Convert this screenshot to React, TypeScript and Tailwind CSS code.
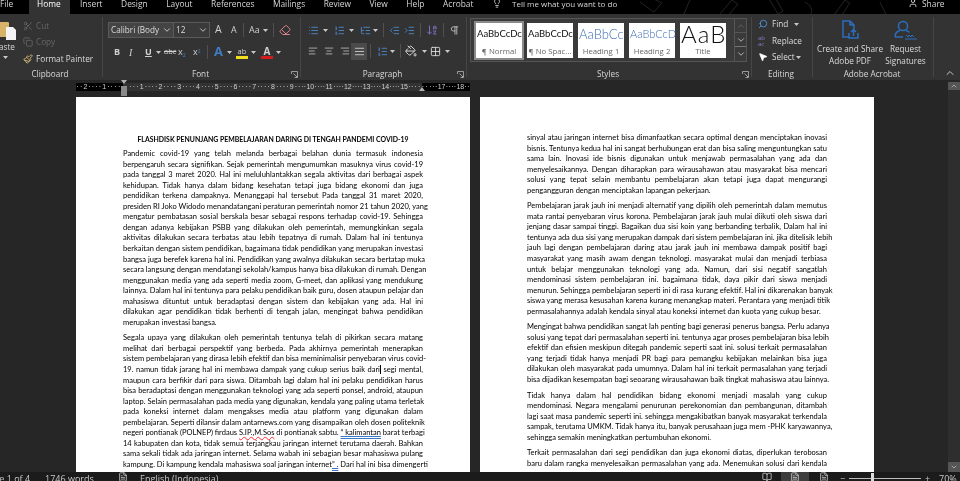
import type { ReactNode } from "react"
import {
  AlignCenter,
  AlignJustify,
  AlignLeft,
  AlignRight,
  ArrowDownAZ,
  BookOpen,
  ChevronDown,
  ChevronUp,
  Copy,
  Eraser,
  FileText,
  Grid2x2,
  IndentDecrease,
  IndentIncrease,
  Lightbulb,
  List,
  ListOrdered,
  ListTree,
  MousePointer2,
  Paintbrush,
  PaintBucket,
  Pilcrow,
  Scissors,
  Search,
  User,
} from "lucide-react"

const tabs = ["Insert", "Design", "Layout", "References", "Mailings", "Review", "View", "Help", "Acrobat"]

const rulerLabels = ["2", "1", "", "1", "2", "3", "4", "5", "6", "7", "8", "9", "10", "11", "12", "13", "14", "15", "", "17", "18"]

const styleItems = [
  { sample: "AaBbCcDc", label: "¶ Normal", cls: "text-[9.5px] text-[#111]", selected: true },
  { sample: "AaBbCcDc", label: "¶ No Spac...", cls: "text-[9.5px] text-[#111]", selected: false },
  { sample: "AaBbCc", label: "Heading 1", cls: "text-[13px] font-light text-[#3d6db5]", selected: false },
  { sample: "AaBbCcD", label: "Heading 2", cls: "text-[11px] font-light text-[#3d6db5]", selected: false },
  { sample: "AaB", label: "Title", cls: "text-[24px] font-light leading-[20px] tracking-[1px] text-[#111]", selected: false },
]

// left page, line by line so the breaks stay the same as the document
const pageOne: string[][] = [
  [
    "Pandemic covid-19 yang telah melanda berbagai belahan dunia termasuk indonesia",
    "berpengaruh secara signifikan. Sejak pemerintah mengumumkan masuknya virus covid-19",
    "pada tanggal 3 maret 2020. Hal ini meluluhlantakkan segala aktivitas dari berbagai aspek",
    "kehidupan. Tidak hanya dalam bidang kesehatan tetapi juga bidang ekonomi dan juga",
    "pendidikan terkena dampaknya. Menanggapi hal tersebut Pada tanggal 31 maret 2020,",
    "presiden RI Joko Widodo menandatangani peraturan pemerintah nomor 21 tahun 2020, yang",
    "mengatur pembatasan sosial berskala besar sebagai respons terhadap covid-19. Sehingga",
    "dengan adanya kebijakan PSBB yang dilakukan oleh pemerintah, memungkinkan segala",
    "aktivitas dilakukan secara terbatas atau lebih tepatnya di rumah. Dalam hal ini tentunya",
    "berkaitan dengan sistem pendidikan, bagaimana tidak pendidikan yang merupakan investasi",
    "bangsa juga berefek karena hal ini. Pendidikan yang awalnya dilakukan secara bertatap muka",
    "secara langsung dengan mendatangi sekolah/kampus hanya bisa dilakukan di rumah. Dengan",
    "menggunakan media yang ada seperti media zoom, G-meet, dan aplikasi yang mendukung",
    "lainnya. Dalam hal ini tentunya para pelaku pendidikan baik guru, dosen ataupun pelajar dan",
    "mahasiswa dituntut untuk beradaptasi dengan sistem dan kebijakan yang ada. Hal ini",
    "dilakukan agar pendidikan tidak berhenti di tengah jalan, mengingat bahwa pendidikan",
    "merupakan investasi bangsa.",
  ],
]

const pageTwo: string[][] = [
  [
    "sinyal atau jaringan internet bisa dimanfaatkan secara optimal dengan menciptakan inovasi",
    "bisnis. Tentunya kedua hal ini sangat berhubungan erat dan bisa saling menguntungkan satu",
    "sama lain. Inovasi ide bisnis digunakan untuk menjawab permasalahan yang ada dan",
    "menyelesaikannya. Dengan diharapkan para wirausahawan atau masyarakat bisa mencari",
    "solusi yang tepat selain membantu pembelajaran akan tetapi juga dapat mengurangi",
    "pengangguran dengan menciptakan lapangan pekerjaan.",
  ],
  [
    "Pembelajaran jarak jauh ini menjadi alternatif yang dipilih oleh pemerintah dalam memutus",
    "mata rantai penyebaran virus korona. Pembelajaran jarak jauh mulai diikuti oleh siswa dari",
    "jenjang dasar sampai tinggi.  Bagaikan dua sisi koin yang berbanding terbalik, Dalam hal ini",
    "tentunya ada dua sisi yang merupakan dampak dari sistem pembelajaran ini. jika ditelisik lebih",
    "jauh lagi dengan pembelajaran daring atau jarak jauh ini membawa dampak positif bagi",
    "masyarakat yang masih awam dengan teknologi. masyarakat mulai dan menjadi terbiasa",
    "untuk belajar menggunakan teknologi yang ada. Namun, dari sisi negatif sangatlah",
    "mendominasi sistem pembelajaran ini. bagaimana tidak, daya pikir dari siswa menjadi",
    "menurun. Sehingga pembelajaran seperti ini di rasa kurang efektif. Hal ini dikarenakan banyak",
    "siswa yang merasa kesusahan karena kurang menangkap materi. Perantara yang menjadi titik",
    "permasalahannya adalah kendala sinyal atau koneksi internet dan kuota yang cukup besar.",
  ],
  [
    "Mengingat bahwa pendidikan sangat lah penting bagi generasi penerus bangsa. Perlu adanya",
    "solusi yang tepat dari permasalahan seperti ini. tentunya agar proses pembelajaran bisa lebih",
    "efektif dan efisien meskipun ditegah pandemic seperti saat ini. solusi terkait permasalahan",
    "yang terjadi tidak hanya menjadi PR bagi para pemangku kebijakan melainkan bisa juga",
    "dilakukan oleh masyarakat pada umumnya. Dalam hal ini terkait permasalahan yang terjadi",
    "bisa dijadikan kesempatan bagi seoarang wirausahawan baik tingkat mahasiswa atau lainnya.",
  ],
  [
    "Tidak hanya dalam hal pendidikan bidang ekonomi menjadi masalah yang cukup",
    "mendominasi. Negara mengalami penurunan perekonomian dan pembangunan, ditambah",
    "lagi saat masa pandemic seperti ini. sehingga mengakibatkan banyak masyarakat terkendala",
    "sampak, terutama UMKM. Tidak hanya itu, banyak perusahaan juga mem -PHK karyawannya,",
    "sehingga semakin meningkatkan pertumbuhan ekonomi.",
  ],
]

function Line({ children, last }: { children: ReactNode; last?: boolean }) {
  return (
    <div className={last ? "h-[10.55px] whitespace-pre" : "h-[10.55px] whitespace-nowrap text-justify [text-align-last:justify]"}>
      {children}
    </div>
  )
}

function Para({ lines }: { lines: string[] }) {
  return (
    <div className="mb-[5px]">
      {lines.map((l, i) => (
        <Line key={i} last={i === lines.length - 1}>
          {l}
        </Line>
      ))}
    </div>
  )
}

function Caret({ className = "" }: { className?: string }) {
  return (
    <svg width="5" height="3" viewBox="0 0 5 3" className={`shrink-0 ${className}`}>
      <path d="M0 0h5L2.5 3z" fill="#c8c8c8" />
    </svg>
  )
}

function VSep({ className = "" }: { className?: string }) {
  return <div className={`h-[14px] w-px shrink-0 bg-[#505050] ${className}`} />
}

function Launcher() {
  return (
    <svg width="7" height="7" viewBox="0 0 7 7" className="shrink-0">
      <path d="M.5 3V.5h6v6H3.5M6 6 2.5 2.5M5 6h1V5" fill="none" stroke="#b5b5b5" strokeWidth="0.8" />
    </svg>
  )
}

function Group({ label, width, launcher, children }: { label: string; width: string; launcher?: boolean; children: ReactNode }) {
  return (
    <div className={`flex h-full shrink-0 flex-col ${width}`}>
      <div className="h-[54px] overflow-hidden">{children}</div>
      <div className="grid h-[12px] grid-cols-[1fr_auto_1fr] items-center pr-[2px] text-[8.2px] leading-[12px] text-[#d8d8d8]">
        <span />
        <span>{label}</span>
        <span className="flex justify-end">{launcher && <Launcher />}</span>
      </div>
    </div>
  )
}

function GroupSep() {
  return <div className="mt-[3px] h-[60px] w-px shrink-0 bg-[#464646]" />
}

const para = "h-[10px] w-[10px] shrink-0 text-[#bdbdbd]"
const paraBlue = "h-[11px] w-[11px] shrink-0 text-[#4b86c6]"

function RibbonFont() {
  return (
    <div className="pl-[5px] pt-[8px]">
      <div className="flex h-[16px] items-center">
        <div className="flex h-[16px] w-[66px] items-center justify-between border border-[#5a5a5a] bg-[#444] pl-[2px] pr-[1px] text-[8.2px] text-[#dcdcdc]">
          <span className="whitespace-nowrap">Calibri (Body</span>
          <ChevronDown className="h-[10px] w-[10px] shrink-0" />
        </div>
        <div className="flex h-[16px] w-[36px] items-center justify-between border border-l-0 border-[#5a5a5a] bg-[#3a3a3a] pl-[2px] pr-[1px] text-[8.2px] text-[#dcdcdc]">
          <span>12</span>
          <ChevronDown className="h-[10px] w-[10px]" />
        </div>
        <span className="ml-[5px] w-[16px] text-[10.5px] text-[#d0d0d0]">A</span>
        <span className="w-[12px] text-[9px] text-[#d0d0d0]">A</span>
        <VSep className="mr-[5px]" />
        <span className="w-[13px] text-[9px] text-[#cfcfcf]">Aa</span>
        <Caret className="ml-[1px]" />
        <VSep className="mx-[5px]" />
        <Eraser className="h-[12px] w-[12px] text-[#d8828c]" />
      </div>
      <div className="mt-[6px] flex h-[16px] items-center text-[#d0d0d0]">
        <span className="ml-[6px] w-[15px] text-[9px] font-bold">B</span>
        <span className="w-[16px] font-['Liberation_Serif',serif] text-[10px] italic">I</span>
        <span className="w-[10px] text-[9px] font-bold underline">U</span>
        <Caret className="ml-[1px]" />
        <span className="ml-[3px] w-[14px] text-[7.5px] line-through">abc</span>
        <span className="w-[15px] text-[9px]">
          x<sub className="text-[5px] text-[#4b86c6]">2</sub>
        </span>
        <span className="w-[14px] text-[9px]">
          x<sup className="text-[5px] text-[#4b86c6]">2</sup>
        </span>
        <VSep className="mr-[6px]" />
        <span className="w-[11px] text-[13px] font-bold text-[#3f7cc0]">A</span>
        <Caret className="ml-[2px]" />
        <div className="ml-[4px] flex w-[12px] flex-col items-center">
          <span className="h-[10px] text-[7.5px] leading-[10px]">ab</span>
          <span className="h-[3px] w-[12px] bg-[#f0e020]" />
        </div>
        <Caret className="ml-[3px]" />
        <div className="ml-[5px] flex w-[12px] flex-col items-center">
          <span className="h-[10px] text-[10px] font-bold leading-[10px]">A</span>
          <span className="h-[3px] w-[12px] bg-[#d01c1c]" />
        </div>
        <Caret className="ml-[3px]" />
      </div>
    </div>
  )
}

function RibbonParagraph() {
  return (
    <div className="pl-[7px] pt-[8px]">
      <div className="flex h-[16px] items-center">
        <List className={paraBlue} />
        <Caret className="ml-[4px]" />
        <ListOrdered className={`${paraBlue} ml-[6px]`} />
        <Caret className="ml-[4px]" />
        <ListTree className={`${paraBlue} ml-[6px]`} />
        <Caret className="ml-[2px]" />
        <VSep className="mx-[5px]" />
        <IndentDecrease className={paraBlue} />
        <IndentIncrease className={`${paraBlue} ml-[4px]`} />
        <VSep className="mx-[5px]" />
        <ArrowDownAZ className="h-[12px] w-[12px] text-[#7d6fc4]" />
        <VSep className="mx-[5px]" />
        <Pilcrow className="h-[11px] w-[11px] text-[#bdbdbd]" />
      </div>
      <div className="mt-[4px] flex h-[18px] items-center">
        <AlignLeft className={para} />
        <AlignCenter className={`${para} ml-[6px]`} />
        <AlignRight className={`${para} ml-[6px]`} />
        <div className="ml-[1px] flex h-[17px] w-[16px] items-center justify-center bg-[#4a4a4a]">
          <AlignJustify className="h-[11px] w-[11px] text-[#c8c8c8]" />
        </div>
        <VSep className="mx-[3px]" />
        <ListOrdered className={`${paraBlue} ml-[3px]`} />
        <Caret className="ml-[2px]" />
        <VSep className="ml-[5px] mr-[4px]" />
        <PaintBucket className="h-[12px] w-[12px] text-[#d8d8d8]" />
        <Caret className="ml-[5px]" />
        <Grid2x2 className="ml-[3px] h-[11px] w-[11px] text-[#d8d8d8]" />
        <Caret className="ml-[4px]" />
      </div>
    </div>
  )
}

function RibbonStyles() {
  return (
    <div className="ml-[3px] mt-[4px] flex h-[44px] w-[277px] border border-[#555] bg-[#3a3a3a]">
      <div className="flex items-center gap-[5px] pl-[5px]">
        {styleItems.map((s) => (
          <div
            key={s.label}
            className={`flex h-[35px] w-[46px] flex-col overflow-hidden bg-white ${s.selected ? "outline outline-2 outline-[#8a8a8a]" : ""}`}
          >
            <div className={`h-[22px] overflow-hidden whitespace-nowrap pl-[1px] font-['Lato',sans-serif] leading-[22px] ${s.cls}`}>{s.sample}</div>
            <div className="whitespace-nowrap text-center text-[7.8px] leading-[12px] text-[#666]">{s.label}</div>
          </div>
        ))}
      </div>
      <div className="ml-auto flex w-[12px] flex-col border-l border-[#555]">
        <div className="flex h-[14px] items-center justify-center border-b border-[#555]">
          <ChevronUp className="h-[10px] w-[10px] text-[#666]" />
        </div>
        <div className="flex h-[14px] items-center justify-center border-b border-[#777]">
          <ChevronDown className="h-[10px] w-[10px] text-[#ccc]" />
        </div>
        <div className="flex flex-1 items-center justify-center">
          <ChevronDown className="h-[10px] w-[10px] text-[#ccc]" />
        </div>
      </div>
    </div>
  )
}

function AcrobatPdf() {
  return (
    <svg width="19" height="20" viewBox="0 0 19 20" fill="none" stroke="#2a6fc0" strokeWidth="1.5">
      <path d="M8 17H2V1h7l4 4v4M9 1v4h4" />
      <path d="M8 13v5h9v-5M12.5 16V10M10 12l2.5-2.5L15 12" />
    </svg>
  )
}

function AcrobatSign() {
  return (
    <svg width="24" height="20" viewBox="0 0 24 20" fill="none" stroke="#2a6fc0" strokeWidth="1.5">
      <circle cx="9" cy="6" r="4.6" />
      <path d="M1 17c0-4 3-6 5-6.500M12 10.500c1.500.4 2.600 1 3.300 2M1 17h8" />
      <path d="M12 15l2 2 1-2 2 2 1-2 2 2M11 19h12" strokeWidth="1" />
    </svg>
  )
}

export default function App() {
  return (
    <div className="flex h-[481px] w-[960px] flex-col overflow-hidden bg-[#262626] font-['Open_Sans',sans-serif] blur-[0.35px]">
      {/* title / tabs strip */}
      <div className="flex h-[14px] shrink-0 items-start bg-black text-[8.4px] leading-[7px] text-[#d6d6d6]">
        <span className="w-[29px]">File</span>
        <div className="h-[14px] w-[41px] bg-[#333] pl-[8px] text-white">Home</div>
        <div className="flex pl-[10px]">
          {tabs.map((t) => (
            <span key={t} className="mr-[18.500px] whitespace-nowrap">
              {t}
            </span>
          ))}
        </div>
        <div className="flex items-start">
          <Lightbulb className="mt-[-2px] h-[10px] w-[10px] text-[#ddd]" />
          <span className="ml-[10px] whitespace-nowrap text-[8px]">Tell me what you want to do</span>
        </div>
        <svg viewBox="0 0 285 14" className="h-[14px] flex-1" fill="none" stroke="#232323" strokeWidth="1">
          <path d="M20 2l14 10 8-9-10-5M70 0l-6 14M100 14l12-14 6 4-10 12M150 0l8 14 5-3-7-12M185 2c6 3 8 8 6 12M215 14l10-14 5 3-8 12M260 2l6 12" />
        </svg>
        <User className="mr-[4px] mt-[-2px] h-[10px] w-[10px] text-[#ddd]" />
        <span className="w-[38px]">Share</span>
      </div>

      {/* ribbon */}
      <div className="flex h-[66px] shrink-0 bg-[#333]">
        <Group label="Clipboard" width="w-[102px]">
          <div className="flex h-full">
            <div className="flex w-[23px] flex-col items-start">
              <svg width="18" height="20" viewBox="0 0 18 20" className="ml-[-1px] mt-[6px]">
                <rect x="-4" y="2" width="14" height="15" rx="1" fill="#d9b26a" />
                <path d="M7 7h7l3 3v10H7z" fill="#f4f4f4" />
              </svg>
              <span className="mt-[1px] ml-[-1px] text-[8.2px] leading-[12px] text-[#d8d8d8]">aste</span>
              <Caret className="ml-[3px] mt-[3px]" />
            </div>
            <div className="flex flex-col pt-[4px] text-[8.2px] leading-[16px]">
              <div className="flex h-[16px] items-center gap-[3px] text-[#666]">
                <Scissors className="h-[10px] w-[10px]" /> Cut
              </div>
              <div className="flex h-[16px] items-center gap-[3px] text-[#666]">
                <Copy className="h-[10px] w-[10px]" /> Copy
              </div>
              <div className="flex h-[17px] items-center gap-[3px] whitespace-nowrap text-[#dcdcdc]">
                <Paintbrush className="h-[10px] w-[10px] text-[#e0c080]" /> Format Painter
              </div>
            </div>
          </div>
        </Group>
        <GroupSep />
        <Group label="Font" width="w-[197px]" launcher>
          <RibbonFont />
        </Group>
        <GroupSep />
        <Group label="Paragraph" width="w-[165px]" launcher>
          <RibbonParagraph />
        </Group>
        <GroupSep />
        <Group label="Styles" width="w-[284px]" launcher>
          <RibbonStyles />
        </Group>
        <GroupSep />
        <Group label="Editing" width="w-[60px]">
          <div className="flex flex-col pl-[6px] pt-[2px] text-[8.2px] leading-[16.500px] text-[#dcdcdc]">
            <div className="flex h-[16.500px] items-center">
              <Search className="h-[10px] w-[10px] -scale-x-100 text-[#4b9be0]" />
              <span className="ml-[4px]">Find</span>
              <Caret className="ml-[6px]" />
            </div>
            <div className="flex h-[16.500px] items-center">
              <span className="w-[14px] text-[6px] leading-[6px] text-[#8a7cc8]">ab ac</span>
              <span>Replace</span>
            </div>
            <div className="flex h-[16.500px] items-center">
              <MousePointer2 className="h-[10px] w-[10px] text-white" fill="white" />
              <span className="ml-[4px]">Select</span>
              <Caret className="ml-[1px]" />
            </div>
          </div>
        </Group>
        <GroupSep />
        <Group label="Adobe Acrobat" width="w-[120px]">
          <div className="flex pl-[4px] pt-[6px] text-center text-[8.2px] leading-[11.500px] text-[#dcdcdc]">
            <div className="flex w-[66px] flex-col items-center">
              <AcrobatPdf />
              <span className="mt-[3px] whitespace-nowrap">Create and Share</span>
              <span>Adobe PDF</span>
            </div>
            <div className="flex w-[45px] flex-col items-center">
              <AcrobatSign />
              <span className="mt-[3px]">Request</span>
              <span>Signatures</span>
            </div>
          </div>
        </Group>
        <GroupSep />
        <div className="flex flex-1 items-end justify-end pb-[1px] pr-[4px]">
          <ChevronUp className="h-[12px] w-[12px] text-[#c8c8c8]" />
        </div>
      </div>

      {/* document area + scrollbar */}
      <div className="flex min-h-0 flex-1">
        <div className="flex min-w-0 flex-1 flex-col pl-[76px]">
          {/* ruler */}
          <div className="flex h-[17px] shrink-0 items-start pt-[3px]">
            <div className="relative flex h-[8px] w-[394px] bg-[linear-gradient(to_right,#000_47px,#333_47px,#333_346px,#000_346px)] font-['Liberation_Sans',sans-serif] text-[7px] leading-[8px] text-[#cfcfcf]">
              {rulerLabels.map((n, i) => (
                <div key={i} className="flex w-[18.760px] shrink-0 items-center justify-around">
                  <span>·</span>
                  <span>·</span>
                  <span>{n || "·"}</span>
                  <span>·</span>
                  <span>·</span>
                </div>
              ))}
              <div className="absolute left-[45px] top-[-3px] h-0 w-0 border-x-[3px] border-t-[4px] border-x-transparent border-t-[#b0b0b0]" />
              <div className="absolute left-[45px] top-[3px] h-[10px] w-[6px] bg-[#8a8a8a]" />
              <div className="absolute left-[343px] top-[4px] h-0 w-0 border-x-[3px] border-b-[4px] border-x-transparent border-b-[#b0b0b0]" />
            </div>
          </div>
          {/* pages */}
          <div className="flex min-h-0 flex-1 gap-[10px] overflow-hidden font-['Lato',sans-serif] text-[7.5px] leading-[10.55px] text-black">
            <div className="h-[375px] w-[394px] shrink-0 overflow-hidden bg-white pl-[47px] pr-[47px] pt-[37px]">
              <div className="mb-[4.500px] h-[10.55px] whitespace-nowrap text-center text-[6.9px] font-bold">
                FLASHDISK PENUNJANG PEMBELAJARAN DARING DI TENGAH PANDEMI COVID-19
              </div>
              {pageOne.map((p, i) => (
                <Para key={i} lines={p} />
              ))}
              <Line>Segala upaya yang dilakukan oleh pemerintah tentunya telah di pikirkan secara matang</Line>
              <Line>melihat dari berbagai perspektif yang berbeda. Pada akhirnya pemerintah menerapkan</Line>
              <Line>sistem pembelajaran yang dirasa lebih efektif dan bisa meminimalisir penyebaran virus covid-</Line>
              <Line>
                19. namun tidak jarang hal ini membawa dampak yang cukup serius baik dari<span className="border-l border-black" /> segi mental,
              </Line>
              <Line>maupun cara berfikir dari para siswa. Ditambah lagi dalam hal ini pelaku pendidikan harus</Line>
              <Line>bisa beradaptasi dengan menggunakan teknologi yang ada seperti ponsel, android, ataupun</Line>
              <Line>laptop. Selain permasalahan pada media yang digunakan, kendala yang paling utama terletak</Line>
              <Line>pada koneksi internet dalam mengakses media atau platform yang digunakan dalam</Line>
              <Line>pembelajaran. Seperti dilansir dalam antarnews.com yang disampaikan oleh dosen politeknik</Line>
              <Line>
                negeri pontianak (POLNEP) firdaus <span className="underline decoration-red-500 decoration-wavy decoration-1">S.IP.,M.Sos</span> di pontianak sabtu.{" "}
                <span className="underline decoration-[#3b78c8] decoration-double decoration-1">“ kalimantan</span> barat terbagi
              </Line>
              <Line>14 kabupaten dan kota, tidak semua terjangkau jaringan internet terutama daerah. Bahkan</Line>
              <Line>sama sekali tidak ada jaringan internet. Selama wabah ini sebagian besar mahasiswa pulang</Line>
              <Line>
                kampung. Di kampung kendala mahasiswa soal jaringan internet<span className="underline decoration-[#3b78c8] decoration-double decoration-1">” .</span> Dari hal ini bisa dimengerti
              </Line>
            </div>
            <div className="h-[375px] w-[394px] shrink-0 overflow-hidden bg-white pl-[47px] pr-[47px] pt-[36px]">
              {pageTwo.map((p, i) => (
                <Para key={i} lines={p} />
              ))}
              <Line>Terkait permasalahan dari segi pendidikan dan juga ekonomi diatas, diperlukan terobosan</Line>
              <Line>baru dalam rangka menyelesaikan permasalahan yang ada. Menemukan solusi dari kendala</Line>
            </div>
          </div>
        </div>
        {/* scrollbar */}
        <div className="mt-[2px] flex w-[12px] shrink-0 flex-col justify-between bg-[#2e2e2e]">
          <div className="flex h-[8px] items-center justify-center bg-[#555]">
            <ChevronUp className="h-[8px] w-[8px] text-[#ccc]" />
          </div>
          <div className="flex h-[10px] items-center justify-center bg-[#555]">
            <ChevronDown className="h-[8px] w-[8px] text-[#ccc]" />
          </div>
        </div>
      </div>

      {/* status bar */}
      <div className="flex h-[9px] shrink-0 items-start bg-[#1b1b1b] text-[9px] leading-[13px] text-[#c8c8c8]">
        <span className="ml-[-16px] w-[61px] whitespace-nowrap">Page 1 of 4</span>
        <span className="w-[73px] whitespace-nowrap">1746 words</span>
        <FileText className="h-[10px] w-[10px] text-[#c8c8c8]" />
        <span className="ml-[12px] whitespace-nowrap">English (Indonesia)</span>
        <div className="ml-auto flex items-start">
          <BookOpen className="h-[10px] w-[10px]" />
          <div className="ml-[9px] flex h-[9px] w-[28px] justify-center bg-[#3d3d3d]">
            <FileText className="h-[10px] w-[10px]" />
          </div>
          <FileText className="ml-[10px] h-[10px] w-[10px]" />
          <span className="ml-[11px] w-[9px]">−</span>
          <div className="relative mt-[6px] h-[1px] w-[72px] bg-[#bbb]">
            <div className="absolute left-[22px] top-[-5px] h-[9px] w-[3px] bg-[#ddd]" />
          </div>
          <span className="ml-[4px] w-[14px]">+</span>
          <span className="mr-[5px] w-[16px] whitespace-nowrap text-[9px]">70%</span>
        </div>
      </div>
    </div>
  )
}
